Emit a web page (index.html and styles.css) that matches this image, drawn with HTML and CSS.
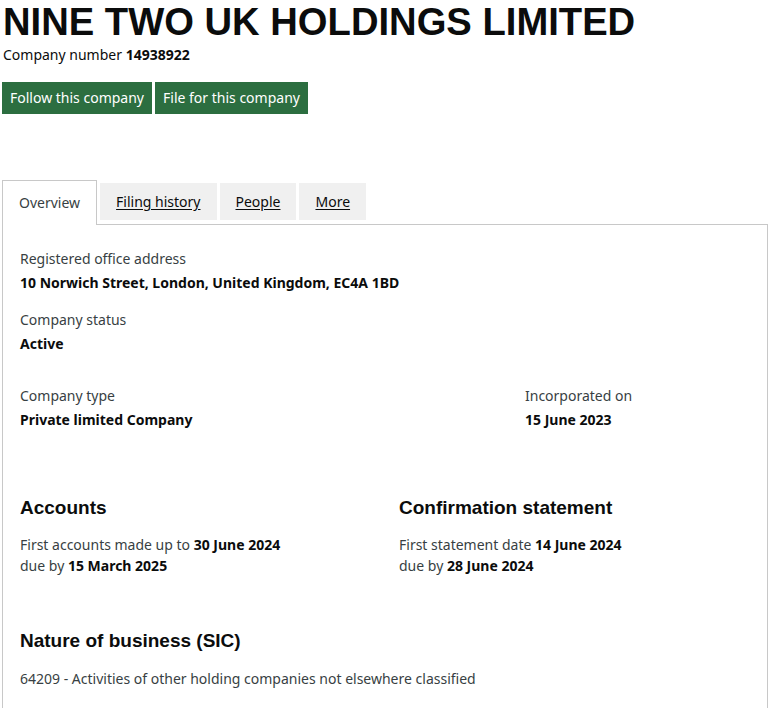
FILE: index.html
```html
<!DOCTYPE html>
<html lang="en">
<head>
<meta charset="utf-8">
<title>NINE TWO UK HOLDINGS LIMITED</title>
<link rel="stylesheet" href="styles.css">
</head>
<body>
<div class="page">
  <h1 class="title">NINE TWO UK HOLDINGS LIMITED</h1>
  <p class="company-number">Company number <strong>14938922</strong></p>
  <div class="actions">
    <a class="btn" href="#">Follow this company</a>
    <a class="btn" href="#">File for this company</a>
  </div>

  <nav class="tabs">
    <span class="tab tab-active">Overview</span>
    <a class="tab" href="#">Filing history</a>
    <a class="tab" href="#">People</a>
    <a class="tab" href="#">More</a>
  </nav>

  <section class="panel">
    <dl class="field">
      <dt>Registered office address</dt>
      <dd>10 Norwich Street, London, United Kingdom, EC4A 1BD</dd>
    </dl>
    <dl class="field">
      <dt>Company status</dt>
      <dd>Active</dd>
    </dl>
    <div class="row-two">
      <dl class="field">
        <dt>Company type</dt>
        <dd>Private limited Company</dd>
      </dl>
      <dl class="field">
        <dt>Incorporated on</dt>
        <dd>15 June 2023</dd>
      </dl>
    </div>

    <div class="row-half">
      <div class="block">
        <h2 class="heading">Accounts</h2>
        <p class="detail">First accounts made up to <strong>30 June 2024</strong><br>due by <strong>15 March 2025</strong></p>
      </div>
      <div class="block">
        <h2 class="heading">Confirmation statement</h2>
        <p class="detail">First statement date <strong>14 June 2024</strong><br>due by <strong>28 June 2024</strong></p>
      </div>
    </div>

    <h2 class="heading sic-heading">Nature of business (SIC)</h2>
    <p class="sic">64209 - Activities of other holding companies not elsewhere classified</p>
  </section>
</div>
</body>
</html>
```
FILE: styles.css
```css
html, body {
  margin: 0;
  padding: 0;
  background: #ffffff;
}

body {
  font-family: "Noto Sans", "Liberation Sans", sans-serif;
  color: #0b0c0c;
  font-size: 14px;
}

.page {
  padding: 0 2px;
}

.title {
  font-family: "Liberation Sans", Arial, sans-serif;
  font-weight: 700;
  font-size: 38.2px;
  line-height: 44px;
  margin: 0;
  padding: 0 0 0 1px;
  white-space: nowrap;
}

.company-number {
  margin: 1px 0 0 1px;
  font-size: 14px;
  line-height: 20px;
  color: #0b0c0c;
}

.company-number strong {
  font-weight: 700;
}

.actions {
  display: flex;
  gap: 3px;
  margin-top: 17px;
}

.btn {
  display: block;
  background: #2c6e40;
  color: #ffffff;
  text-decoration: none;
  font-size: 14px;
  line-height: 32px;
  height: 32px;
  padding: 0 8px;
}

.tabs {
  display: flex;
  align-items: flex-end;
  gap: 3px;
  margin-top: 66px;
  position: relative;
  z-index: 1;
}

.tab {
  display: block;
  background: #f0f0f0;
  color: #0b0c0c;
  text-decoration: underline;
  text-underline-offset: 2px;
  font-size: 14px;
  line-height: 37px;
  height: 37px;
  padding: 0 16px;
  margin-bottom: 4px;
}

.tab-active {
  background: #ffffff;
  text-decoration: none;
  border: 1px solid #c8c8c8;
  border-bottom: 0;
  height: 44px;
  line-height: 43px;
  margin-bottom: -1px;
  padding: 0 16px;
  color: #383f43;
}

.panel {
  border: 1px solid #c8c8c8;
  border-bottom: 0;
  padding: 22px 17px 20px;
}

.field {
  margin: 0 0 13px;
}

.field dt {
  font-size: 14px;
  line-height: 24px;
  color: #383f43;
}

.field dd {
  margin: 0;
  font-weight: 700;
  font-size: 14px;
  line-height: 24px;
}

.row-two {
  display: grid;
  grid-template-columns: 505px 1fr;
  margin-top: 28px;
}

.row-half {
  display: grid;
  grid-template-columns: 379px 1fr;
  margin-top: 51px;
}

.heading {
  font-family: "Liberation Sans", Arial, sans-serif;
  font-weight: 700;
  font-size: 19px;
  line-height: 24px;
  margin: 0;
}

.detail {
  margin: 14px 0 0;
  font-size: 14px;
  line-height: 21px;
  color: #383f43;
}

.detail strong {
  color: #0b0c0c;
}

.sic-heading {
  margin-top: 53px;
}

.sic {
  margin: 16px 0 0;
  font-size: 14px;
  line-height: 20px;
  color: #383f43;
}
```
